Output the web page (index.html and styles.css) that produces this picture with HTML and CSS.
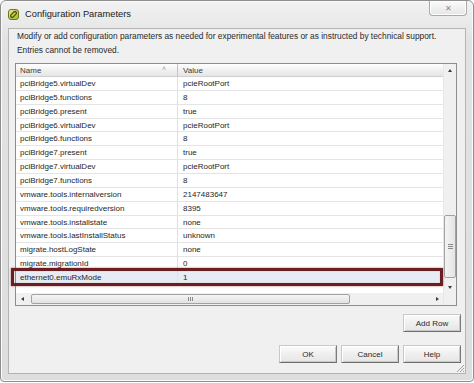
FILE: index.html
```html
<!DOCTYPE html>
<html>
<head>
<meta charset="utf-8">
<link rel="stylesheet" href="styles.css">
</head>
<body>
<div class="window">
  <div class="titlebar">
    <svg class="app-icon" width="11" height="11" viewBox="0 0 11 11">
      <defs>
        <linearGradient id="ig" x1="0" y1="0" x2="1" y2="1">
          <stop offset="0" stop-color="#e6ee8a"/>
          <stop offset="1" stop-color="#a9b62c"/>
        </linearGradient>
      </defs>
      <rect x="0.5" y="0.5" width="10" height="10" rx="2.5" fill="url(#ig)" stroke="#70781f"/>
      <rect x="2" y="4" width="7" height="3" rx="1.5" transform="rotate(-45 5.5 5.5)" fill="none" stroke="#4b5314" stroke-width="1.3"/>
    </svg>
    <span class="title">Configuration Parameters</span>
    <div class="close-btn"><span>✕</span></div>
  </div>
  <div class="client">
    <p class="desc">Modify or add configuration parameters as needed for experimental features or as instructed by technical support.<br>Entries cannot be removed.</p>
    <div class="grid">
      <div class="grid-body">
        <div class="list">
          <div class="row header">
            <div class="cell name">Name<span class="sort">&#x2c4;</span></div>
            <div class="cell value">Value</div>
          </div>
          <div class="row"><div class="cell name">pciBridge5.virtualDev</div><div class="cell value">pcieRootPort</div></div>
          <div class="row"><div class="cell name">pciBridge5.functions</div><div class="cell value">8</div></div>
          <div class="row"><div class="cell name">pciBridge6.present</div><div class="cell value">true</div></div>
          <div class="row"><div class="cell name">pciBridge6.virtualDev</div><div class="cell value">pcieRootPort</div></div>
          <div class="row"><div class="cell name">pciBridge6.functions</div><div class="cell value">8</div></div>
          <div class="row"><div class="cell name">pciBridge7.present</div><div class="cell value">true</div></div>
          <div class="row"><div class="cell name">pciBridge7.virtualDev</div><div class="cell value">pcieRootPort</div></div>
          <div class="row"><div class="cell name">pciBridge7.functions</div><div class="cell value">8</div></div>
          <div class="row"><div class="cell name">vmware.tools.internalversion</div><div class="cell value">2147483647</div></div>
          <div class="row"><div class="cell name">vmware.tools.requiredversion</div><div class="cell value">8395</div></div>
          <div class="row"><div class="cell name">vmware.tools.installstate</div><div class="cell value">none</div></div>
          <div class="row"><div class="cell name">vmware.tools.lastInstallStatus</div><div class="cell value">unknown</div></div>
          <div class="row"><div class="cell name">migrate.hostLogState</div><div class="cell value">none</div></div>
          <div class="row"><div class="cell name">migrate.migrationId</div><div class="cell value">0</div></div>
          <div class="row selected"><div class="cell name">ethernet0.emuRxMode</div><div class="cell value">1</div></div>
        </div>
        <div class="vscroll">
          <div class="sb-btn"><span class="arrow up"></span></div>
          <div class="vtrack"><div class="vthumb"><span class="grip-h"></span></div></div>
          <div class="sb-btn"><span class="arrow down"></span></div>
        </div>
      </div>
      <div class="grid-foot">
        <div class="hscroll">
          <div class="sb-btn h"><span class="arrow left"></span></div>
          <div class="htrack"><div class="hthumb"><span class="grip-v"></span></div></div>
          <div class="sb-btn h"><span class="arrow right"></span></div>
        </div>
        <div class="corner"></div>
      </div>
    </div>
    <div class="addrow-line"><div class="btn">Add Row</div></div>
    <div class="footer">
      <div class="btn">OK</div>
      <div class="btn">Cancel</div>
      <div class="btn">Help</div>
    </div>
    <svg class="resize-grip" width="10" height="10" viewBox="0 0 10 10">
      <path d="M9 2 L2 9 M9 5 L5 9 M9 8 L8 9" stroke="#a0a0a0" stroke-width="1"/>
    </svg>
  </div>
</div>
</body>
</html>
```
FILE: styles.css
```css
html, body {
  margin: 0;
  padding: 0;
}
body {
  width: 474px;
  height: 383px;
  background: #ffffff;
  font-family: "Liberation Sans", Arial, sans-serif;
  font-size: 8px;
  color: #262626;
  overflow: hidden;
}
.window {
  box-sizing: border-box;
  width: 474px;
  height: 382px;
  border: 1px solid #8f8f8f;
  border-radius: 6px 6px 4px 4px;
  background: linear-gradient(#f2f2f2, #e2e2e2 40px, #dedede);
  padding: 0 7px 7px 7px;
  display: flex;
  flex-direction: column;
  box-shadow: inset 0 0 0 1px #fafafa;
}
.titlebar {
  height: 27px;
  display: flex;
  align-items: center;
  padding-bottom: 2px;
  box-sizing: border-box;
}
.app-icon {
  flex: none;
  margin-top: 1px;
}
.title {
  margin-left: 6px;
  font-size: 9.3px;
  color: #1a1a1a;
}
.close-btn {
  margin-left: auto;
  margin-right: -1px;
  align-self: flex-start;
  width: 38px;
  height: 15px;
  box-sizing: border-box;
  border: 1px solid #a9a9a9;
  border-top: none;
  border-radius: 0 0 4px 4px;
  background: linear-gradient(#fbfbfb, #e6e6e6);
  display: flex;
  align-items: center;
  justify-content: center;
  color: #8a8a8a;
  font-size: 8px;
  box-shadow: inset 0 0 0 1px #ffffff;
}
.client {
  position: relative;
  flex: 1;
  border: 1px solid #b4b4b4;
  background: #f0f0f0;
  padding: 0 4px 0 6px;
  display: flex;
  flex-direction: column;
}
.desc {
  margin: 0 0 0 2px;
  line-height: 14px;
  font-size: 8.35px;
  color: #2a2a2a;
}
.grid {
  margin: 6px 4px 0 0;
  border: 1px solid #8d8d8d;
  background: #ffffff;
}
.grid-body {
  display: flex;
  height: 229px;
}
.list {
  flex: 1;
  display: flex;
  flex-direction: column;
}
.row {
  position: relative;
  display: flex;
  height: 13.86px;
  flex: none;
  box-sizing: border-box;
  border-bottom: 1px solid #e4e4e4;
  align-items: center;
}
.row.header {
  height: 13px;
  background: linear-gradient(#ffffff, #f1f1f1 50%, #e6e6e6);
  border-bottom: 1px solid #d0d0d0;
  color: #3c3c3c;
}
.cell {
  height: 100%;
  display: flex;
  align-items: center;
  box-sizing: border-box;
  white-space: nowrap;
}
.cell.name {
  width: 162px;
  padding-left: 4px;
  border-right: 1px solid #e0e0e0;
  position: relative;
}
.row.header .cell.name {
  border-right: 1px solid #c4c4c4;
}
.cell.value {
  flex: 1;
  padding-left: 5px;
}
.sort {
  position: absolute;
  right: 11px;
  top: 1px;
  font-size: 7px;
  color: #9a9a9a;
}
.row.selected {
  background: #e7ebf3;
}
.row.selected::after {
  content: "";
  position: absolute;
  left: -5px;
  right: 0;
  top: -3px;
  bottom: -2px;
  border: 3px solid #6b1e22;
  box-shadow: 0 0 2px rgba(120, 40, 40, 0.6), inset 0 0 1px rgba(120, 40, 40, 0.5);
}
.vscroll {
  width: 12px;
  display: flex;
  flex-direction: column;
  background: #f0f0f0;
  border-left: 1px solid #e8e8e8;
}
.sb-btn {
  height: 12px;
  display: flex;
  align-items: center;
  justify-content: center;
  flex: none;
}
.sb-btn.h {
  width: 12px;
  height: 100%;
}
.arrow {
  width: 0;
  height: 0;
  border: 2.5px solid transparent;
}
.arrow.up { border-bottom: 3px solid #3d3d3d; border-top-width: 0; }
.arrow.down { border-top: 3px solid #3d3d3d; border-bottom-width: 0; }
.arrow.left { border-right: 3px solid #3d3d3d; border-left-width: 0; }
.arrow.right { border-left: 3px solid #3d3d3d; border-right-width: 0; }
.vtrack {
  flex: 1;
  position: relative;
}
.vthumb {
  margin: 139px 0 0 0;
  height: 63px;
  box-sizing: border-box;
  border: 1px solid #a2a2a2;
  border-radius: 2px;
  background: linear-gradient(90deg, #f4f4f4, #e4e4e4);
  display: flex;
  align-items: center;
  justify-content: center;
}
.grip-h {
  width: 5px;
  height: 5px;
  background: repeating-linear-gradient(#8a8a8a 0 1px, transparent 1px 2px);
}
.grid-foot {
  display: flex;
  height: 12px;
}
.hscroll {
  flex: 1;
  display: flex;
  background: #f0f0f0;
}
.htrack {
  flex: 1;
  display: flex;
  align-items: center;
  padding-left: 3px;
}
.hthumb {
  width: 319px;
  height: 10px;
  box-sizing: border-box;
  border: 1px solid #a2a2a2;
  border-radius: 2px;
  background: linear-gradient(#f4f4f4, #e2e2e2);
  display: flex;
  align-items: center;
  justify-content: center;
}
.grip-v {
  width: 5px;
  height: 4px;
  background: repeating-linear-gradient(90deg, #8a8a8a 0 1px, transparent 1px 2px);
}
.corner {
  width: 12px;
  background: #f0f0f0;
  border-left: 1px solid #e8e8e8;
}
.addrow-line {
  display: flex;
  justify-content: flex-end;
  margin-top: 8px;
}
.footer {
  display: flex;
  justify-content: flex-end;
  gap: 4px;
  margin-top: 13px;
}
.btn {
  width: 58px;
  height: 18px;
  box-sizing: border-box;
  border: 1px solid #c9c9c9;
  border-right-color: #7a7a7a;
  border-bottom-color: #6e6e6e;
  background: linear-gradient(#fbfbfb, #efefef 50%, #e6e6e6);
  box-shadow: inset 1px 1px 0 #ffffff, inset -1px -1px 0 #c8c8c8;
  display: flex;
  align-items: center;
  justify-content: center;
  color: #2a2a2a;
}
.resize-grip {
  position: absolute;
  right: 0;
  bottom: 0;
}
```
